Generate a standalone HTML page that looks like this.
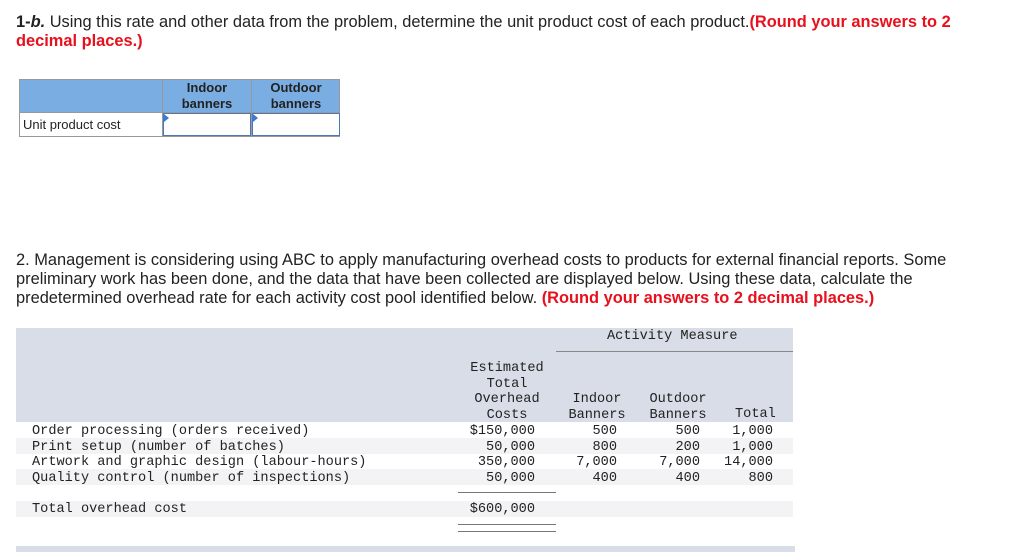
<!DOCTYPE html>
<html><head><style>
body{margin:0;width:1024px;height:557px;background:#fff;font-family:"Liberation Sans",sans-serif;color:#222;position:relative;overflow:hidden}
.p{position:absolute;left:16px;font-size:16.4px;line-height:19px;width:960px}
.r{color:#e8101c;font-weight:bold}
.a{position:absolute}
.m{font-family:"Liberation Mono",monospace;font-size:13.6px;line-height:15.7px;white-space:pre;position:absolute;color:#222}
.rt{text-align:right}
</style></head><body>
<div class="p" style="top:13px"><b>1-<i>b.</i></b> Using this rate and other data from the problem, determine the unit product cost of each product.<span class="r">(Round your answers to 2 decimal places.)</span></div>

<div class="a" style="left:19px;top:79px;width:321px;height:58px;border:1px solid #999;box-sizing:border-box"></div>
<div class="a" style="left:20px;top:80px;width:319px;height:32px;background:#7aade2"></div>
<div class="a" style="left:162px;top:80px;width:1px;height:56px;background:#999"></div>
<div class="a" style="left:251px;top:80px;width:1px;height:56px;background:#999"></div>
<div class="a" style="left:20px;top:112px;width:319px;height:1px;background:#999"></div>
<div class="a" style="left:163px;top:80px;width:88px;text-align:center;font-size:13px;font-weight:bold;line-height:16px">Indoor<br>banners</div>
<div class="a" style="left:252px;top:80px;width:88px;text-align:center;font-size:13px;font-weight:bold;line-height:16px">Outdoor<br>banners</div>
<div class="a" style="left:23px;top:117px;font-size:13px">Unit product cost</div>
<div class="a" style="left:163px;top:113px;width:88px;height:23px;border:1px solid #4a78b8;box-sizing:border-box"></div>
<div class="a" style="left:252px;top:113px;width:88px;height:23px;border:1px solid #4a78b8;box-sizing:border-box"></div>
<div class="a" style="left:164px;top:114px;width:0;height:0;border-top:4px solid transparent;border-bottom:4px solid transparent;border-left:5px solid #3a7bd5"></div>
<div class="a" style="left:253px;top:114px;width:0;height:0;border-top:4px solid transparent;border-bottom:4px solid transparent;border-left:5px solid #3a7bd5"></div>

<div class="p" style="top:251px">2. Management is considering using ABC to apply manufacturing overhead costs to products for external financial reports. Some preliminary work has been done, and the data that have been collected are displayed below. Using these data, calculate the predetermined overhead rate for each activity cost pool identified below. <span class="r">(Round your answers to 2 decimal places.)</span></div>

<div class="a" style="left:16px;top:328px;width:777px;height:94px;background:#d9dde7"></div>
<div class="a" style="left:16px;top:438px;width:777px;height:16px;background:#f3f3f5"></div>
<div class="a" style="left:16px;top:469px;width:777px;height:16px;background:#f3f3f5"></div>
<div class="a" style="left:16px;top:501px;width:777px;height:16px;background:#f3f3f5"></div>
<div class="a" style="left:16px;top:546px;width:779px;height:6px;background:#d9dde7"></div>
<div class="a" style="left:556px;top:351px;width:237px;height:1px;background:#888"></div>
<div class="a" style="left:458px;top:492px;width:98px;height:1px;background:#777"></div>
<div class="a" style="left:458px;top:524px;width:98px;height:1px;background:#777"></div>
<div class="a" style="left:458px;top:531px;width:98px;height:1px;background:#777"></div>

<div class="m" style="left:607px;top:329px">Activity Measure</div>
<div class="m" style="left:455px;top:361px;width:104px;text-align:center">Estimated
Total
Overhead
Costs</div>
<div class="m" style="left:562px;top:392px;width:70px;text-align:center">Indoor
Banners</div>
<div class="m" style="left:643px;top:392px;width:70px;text-align:center">Outdoor
Banners</div>
<div class="m" style="left:735px;top:407px">Total</div>
<div class="m" style="left:32px;top:424px">Order processing (orders received)
Print setup (number of batches)
Artwork and graphic design (labour-hours)
Quality control (number of inspections)</div>
<div class="m rt" style="left:430px;top:424px;width:105px">$150,000
50,000
350,000
50,000</div>
<div class="m rt" style="left:540px;top:424px;width:77px">500
800
7,000
400</div>
<div class="m rt" style="left:620px;top:424px;width:80px">500
200
7,000
400</div>
<div class="m rt" style="left:700px;top:424px;width:73px">1,000
1,000
14,000
800</div>
<div class="m" style="left:32px;top:502px">Total overhead cost</div>
<div class="m rt" style="left:430px;top:502px;width:105px">$600,000</div>
</body></html>
